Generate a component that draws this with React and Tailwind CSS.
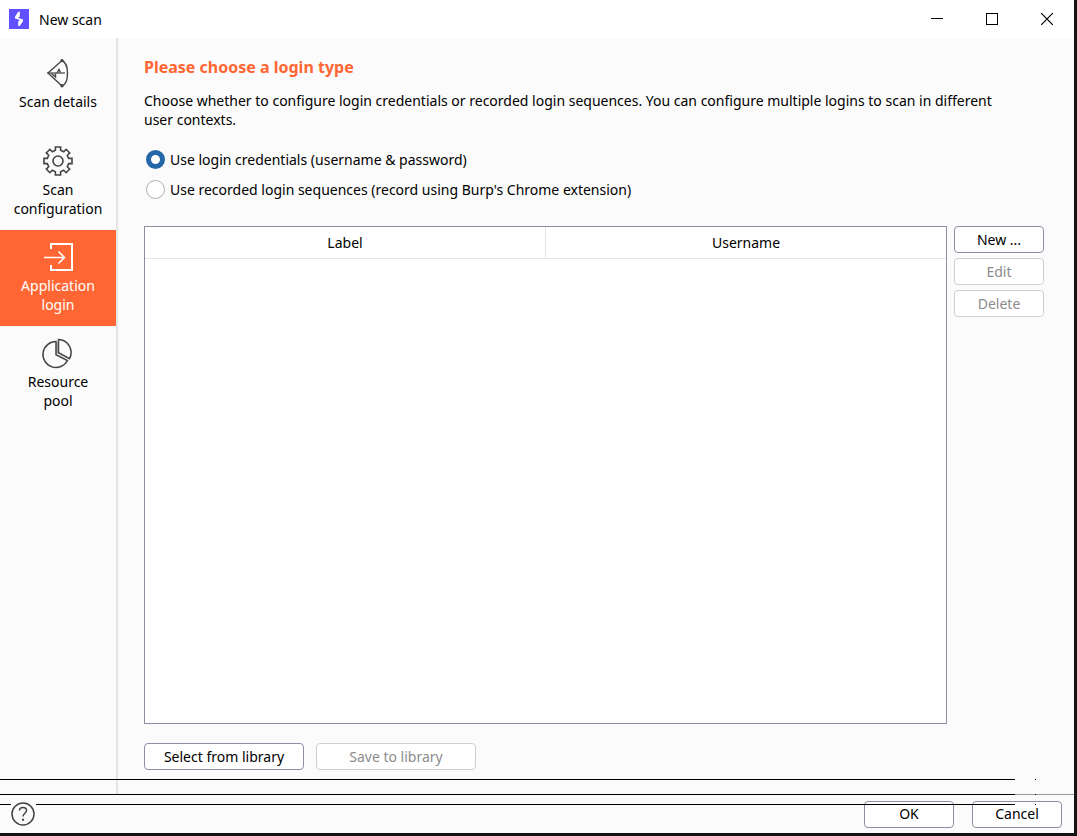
import { useState } from 'react';

const LogoIcon = () => (
  <svg className="h-5 w-5" viewBox="0 0 20 20" aria-hidden="true">
    <rect width="20" height="20" fill="#6150ff" />
    <path d="M10.800 2.800v4.700l-1.600 1.500 4.800 1.500v1.800L10.800 17H9.200v-4.500l1.600-1.500L6 9.500V7.700L9.200 2.800z" fill="#fff" />
  </svg>
);

const ScanDetailsIcon = () => (
  <svg className="h-[30px] w-[30px]" viewBox="0 0 30 30" fill="none" stroke="#444" strokeWidth="1.4">
    <path d="M5 15L19 2.500C22 4 24.500 7 24.500 15S22 27 19 28L5 15" />
    <circle cx="19" cy="2.600" r="1" fill="#444" />
    <circle cx="19" cy="27.800" r="1" fill="#444" />
    <path d="M4 15h18" strokeWidth="1.200" />
    <path d="M8.500 15.500l4 3.500v-3.500M14 15l2-3.500 1.500 3" />
  </svg>
);

const GearIcon = () => (
  <svg className="h-[30px] w-[30px]" viewBox="0 0 30 30" fill="none" stroke="#444" strokeWidth="1.6">
    <path d="M12.4 4.3V1h5.2v3.3l3.100 1.400 2.400-2.400 3.600 3.600-2.400 2.400 1.400 3.100H29v5.200h-3.300l-1.400 3.100 2.400 2.400-3.600 3.600-2.400-2.400-3.100 1.400V29h-5.200v-3.300l-3.100-1.400-2.400 2.400-3.600-3.600 2.400-2.400-1.400-3.100H1v-5.200h3.300l1.400-3.100-2.400-2.400 3.600-3.600 2.400 2.400z" />
    <circle cx="15" cy="15" r="5" />
  </svg>
);

const LoginIcon = () => (
  <svg className="h-[30px] w-[30px]" viewBox="0 0 30 30" fill="none" stroke="#fff">
    <path d="M8 7V2h21v26H8v-5" strokeWidth="2" />
    <path d="M1 15.500h20M15.500 9.500l6 6-6 6" strokeWidth="1.500" />
  </svg>
);

const PieIcon = () => (
  <svg className="h-[30px] w-[30px] overflow-visible" viewBox="0 0 30 30" fill="none" stroke="#444" strokeWidth="1.500">
    <path d="M13 4h2.500v11.500H13z" fill="#bbb" stroke="none" />
    <path d="M13 3.500A13 13 0 1 0 24.500 22.500L13 16.700z" />
    <path d="M15.500 1.500v13.200l11 6A13 13 0 0 0 15.500 1.500z" />
  </svg>
);

const HelpIcon = () => (
  <svg className="h-6 w-6" viewBox="0 0 24 24" fill="none" stroke="#444" strokeWidth="1.500">
    <circle cx="12" cy="12" r="11" fill="#fbfbfb" />
    <path d="M8.500 8.500C8.500 6.500 10 5.500 12 5.500s3.500 1.200 3.500 3c0 2.500-3.500 3-3.500 6" />
    <path d="M11 17.800h2" strokeWidth="2" />
  </svg>
);

const steps = [
  { id: 'details', label: 'Scan details', icon: ScanDetailsIcon },
  { id: 'config', label: 'Scan configuration', icon: GearIcon },
  { id: 'login', label: 'Application login', icon: LoginIcon },
  { id: 'pool', label: 'Resource pool', icon: PieIcon },
];

const loginTypes = [
  { id: 'credentials', label: 'Use login credentials (username & password)' },
  { id: 'recorded', label: "Use recorded login sequences (record using Burp's Chrome extension)" },
];

const Button = ({ children, className = 'w-[90px]', disabled = false }) => (
  <button
    type="button"
    disabled={disabled}
    className={`h-[27px] rounded border border-[#8f8da3] bg-white pb-px text-black disabled:border-[#cfcfcf] disabled:text-[#8c8c8c] ${className}`}
  >
    {children}
  </button>
);

const TitleBar = () => (
  <header className="flex h-[38px] shrink-0 items-center bg-white pl-[9px]">
    <LogoIcon />
    <h1 className="ml-[10px] flex-1">New scan</h1>
    <div className="flex">
      <button type="button" aria-label="Minimize" className="flex h-[38px] w-[55px] items-center justify-center">
        <svg className="h-3 w-3" viewBox="0 0 12 12" stroke="#000" shapeRendering="crispEdges">
          <path d="M0 5.500h12" />
        </svg>
      </button>
      <button type="button" aria-label="Maximize" className="flex h-[38px] w-[55px] items-center justify-center">
        <svg className="h-3 w-3" viewBox="0 0 12 12" fill="none" stroke="#000">
          <rect x="0.500" y="0.500" width="11" height="11" />
        </svg>
      </button>
      <button type="button" aria-label="Close" className="flex h-[38px] w-[55px] items-center justify-center">
        <svg className="h-3 w-3" viewBox="0 0 12 12" stroke="#000" strokeWidth="1.200">
          <path d="M0 0l12 12M12 0L0 12" />
        </svg>
      </button>
    </div>
  </header>
);

const Sidebar = ({ active, onSelect }) => (
  <nav className="flex w-[118px] shrink-0 flex-col border-r-2 border-[#e4e4e4] pt-2">
    {steps.map(({ id, label, icon: Icon }) => (
      <button
        key={id}
        type="button"
        onClick={() => onSelect(id)}
        className={`flex min-h-[88px] flex-col items-center py-3 ${
          active === id ? 'bg-[#ff6633] text-white' : 'text-black'
        }`}
      >
        <Icon />
        <span className="mt-1 max-w-[91px]">{label}</span>
      </button>
    ))}
  </nav>
);

const LoginTable = () => (
  <div className="flex-1 border border-[#8f8da3] bg-white">
    <table className="w-full table-fixed border-collapse">
      <thead>
        <tr className="h-[31px] border-b border-[#e4e4e4]">
          <th className="border-r border-[#e4e4e4] font-normal">Label</th>
          <th className="font-normal">Username</th>
        </tr>
      </thead>
      <tbody />
    </table>
  </div>
);

// One horizontal rule with the small break before the right edge
const Rule = ({ className }) => (
  <div className={`pointer-events-none absolute left-0 right-[38px] flex h-px justify-between ${className}`}>
    <div className="mr-5 flex-1 bg-black" />
    <div className="w-px bg-black" />
  </div>
);

const Footer = () => (
  <footer className="relative flex h-[39px] shrink-0 items-center border-t border-[#999] pl-[11px] pr-3">
    <Rule className="-top-4" />
    <Rule className="-top-px" />
    <button type="button" aria-label="Help" className="rounded-full">
      <HelpIcon />
    </button>
    <div className="ml-auto flex gap-[18px]">
      <Button>OK</Button>
      <Button>Cancel</Button>
    </div>
    <Rule className="top-[9px] ml-9" />
    <div className="pointer-events-none absolute left-0 top-[9px] h-px w-[11px] bg-black" />
  </footer>
);

const App = () => {
  const [step, setStep] = useState('login');
  const [loginType, setLoginType] = useState('credentials');

  return (
    <div className="flex min-h-screen flex-col border-r-[3px] border-b-[3px] border-[#141414] bg-[#fbfbfb] font-['Noto_Sans','Open_Sans',sans-serif] text-[14px] leading-[19px] text-black">
      <TitleBar />
      <div className="flex flex-1">
        <Sidebar active={step} onSelect={setStep} />

        <main className="flex flex-1 flex-col pt-[17px] pr-[30px] pb-6 pl-[26px]">
          <h2 className="text-[16px] leading-6 font-bold text-[#ff6633]">Please choose a login type</h2>
          <p className="mt-3 pr-5">
            Choose whether to configure login credentials or recorded login sequences. You can configure
            multiple logins to scan in different user contexts.
          </p>

          <fieldset className="mt-[21px] flex flex-col gap-[11px] pl-[2px]">
            {loginTypes.map(({ id, label }) => (
              <label key={id} className="flex items-center gap-[5px]">
                <input
                  type="radio"
                  name="loginType"
                  checked={loginType === id}
                  onChange={() => setLoginType(id)}
                  className="h-[19px] w-[19px] appearance-none rounded-full border border-[#b0b0b0] bg-white checked:border-[5px] checked:border-[#2566a8]"
                />
                {label}
              </label>
            ))}
          </fieldset>

          <div className="mt-[27px] flex flex-1 gap-[7px]">
            <LoginTable />
            <div className="flex flex-col gap-[5px]">
              <Button>New ...</Button>
              <Button disabled>Edit</Button>
              <Button disabled>Delete</Button>
            </div>
          </div>

          <div className="mt-[19px] flex gap-3">
            <Button className="w-[160px]">Select from library</Button>
            <Button className="w-[160px]" disabled>
              Save to library
            </Button>
          </div>
        </main>
      </div>
      <Footer />
    </div>
  );
};

export default App;
